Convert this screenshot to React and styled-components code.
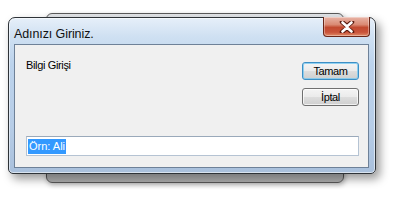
import styled, { createGlobalStyle } from "styled-components";

const GlobalStyle = createGlobalStyle`
  html, body {
    margin: 0;
    padding: 0;
    background: #ffffff;
  }
  * {
    box-sizing: border-box;
  }
`;

const Desktop = styled.div`
  position: relative;
  width: 395px;
  height: 202px;
  overflow: hidden;
  background: #ffffff;
  font-family: "Liberation Sans", Arial, sans-serif;
`;

const BackWindow = styled.div`
  position: absolute;
  left: 46px;
  top: 13px;
  width: 298px;
  height: 170px;
  border: 1px solid #5a5a5a;
  border-radius: 6px;
  background: linear-gradient(180deg, #e2e4e7 0%, #cfd3d8 50%, #c4c6c9 94%, #b0b0b0 100%);
  box-shadow: 1px 2px 5px rgba(0, 0, 0, 0.3);
`;

const Window = styled.div`
  position: absolute;
  left: 8px;
  top: 17px;
  width: 368px;
  height: 157px;
  display: flex;
  flex-direction: column;
  border: 1px solid #2e3338;
  border-radius: 7px 7px 5px 5px;
  background: linear-gradient(
    180deg,
    #e6eff9 0%,
    #cfe0f2 12%,
    #bcd3ec 30%,
    #b7cde7 70%,
    #a9c0dc 100%
  );
  box-shadow: inset 0 0 0 1px rgba(255, 255, 255, 0.55),
    4px 5px 10px rgba(0, 0, 0, 0.4);
`;

const TitleBar = styled.div`
  height: 26px;
  display: flex;
  align-items: flex-start;
  justify-content: space-between;
  padding: 0 5px 0 5px;
`;

const Title = styled.span`
  margin-top: 9px;
  font-size: 12.5px;
  color: #111;
  letter-spacing: -0.1px;
`;

const CloseButton = styled.div`
  width: 47px;
  height: 20px;
  margin-top: -1px;
  display: flex;
  align-items: center;
  justify-content: center;
  border: 1px solid #6a2618;
  border-top: none;
  border-radius: 0 0 4px 4px;
  background: linear-gradient(
    180deg,
    #e8b4a6 0%,
    #da8a74 40%,
    #c24a30 55%,
    #c9533a 80%,
    #e08a66 100%
  );
  box-shadow: inset 0 0 0 1px rgba(255, 255, 255, 0.35);
`;

const Client = styled.div`
  flex: 1;
  margin: 0 6px 5px 5px;
  display: flex;
  flex-direction: column;
  justify-content: space-between;
  padding: 13px 9px 11px 11px;
  background: #f0f0f0;
  border: 1px solid #6e8198;
`;

const TopRow = styled.div`
  display: flex;
  justify-content: space-between;
  align-items: flex-start;
`;

const Label = styled.span`
  margin-top: 1px;
  font-size: 11px;
  letter-spacing: -0.35px;
  color: #000;
`;

const ButtonColumn = styled.div`
  display: flex;
  flex-direction: column;
  gap: 8px;
  margin-top: 4px;
`;

const Button = styled.div`
  width: 57px;
  height: 18px;
  display: flex;
  align-items: center;
  justify-content: center;
  font-size: 11px;
  letter-spacing: -0.4px;
  color: #000;
  border-radius: 3px;
  border: 1px solid ${(p) => (p.$default ? "#3d8fc5" : "#707070")};
  background: linear-gradient(180deg, #f4f4f4 0%, #ebebeb 48%, #dddddd 52%, #cfcfcf 100%);
  box-shadow: inset 0 0 0 1px
    ${(p) => (p.$default ? "rgba(120, 200, 240, 0.8)" : "rgba(255, 255, 255, 0.7)")};
`;

const TextBox = styled.div`
  height: 20px;
  display: flex;
  align-items: center;
  padding-left: 1px;
  background: #ffffff;
  border: 1px solid #b5c3d3;
  border-top-color: #9aa9ba;
`;

const Selected = styled.span`
  font-size: 11px;
  line-height: 15px;
  padding: 0 1px;
  color: #ffffff;
  background: #3399ff;
`;

const CloseIcon = () => (
  <svg width="16" height="12" viewBox="0 0 16 12">
    <path
      d="M3 1 L8 5 L13 1 M3 11 L8 7 L13 11"
      stroke="#5a1a0e"
      strokeWidth="4.5"
      fill="none"
      strokeLinecap="round"
    />
    <path
      d="M3.5 1.5 L8 5.5 L12.5 1.5 M3.5 10.5 L8 6.5 L12.5 10.5"
      stroke="#ffffff"
      strokeWidth="2.6"
      fill="none"
      strokeLinecap="round"
    />
  </svg>
);

export default function App() {
  return (
    <>
      <GlobalStyle />
      <Desktop>
        <BackWindow />
        <Window>
          <TitleBar>
            <Title>Adınızı Giriniz.</Title>
            <CloseButton>
              <CloseIcon />
            </CloseButton>
          </TitleBar>
          <Client>
            <TopRow>
              <Label>Bilgi Girişi</Label>
              <ButtonColumn>
                <Button $default>Tamam</Button>
                <Button>İptal</Button>
              </ButtonColumn>
            </TopRow>
            <TextBox>
              <Selected>Örn: Ali</Selected>
            </TextBox>
          </Client>
        </Window>
      </Desktop>
    </>
  );
}
